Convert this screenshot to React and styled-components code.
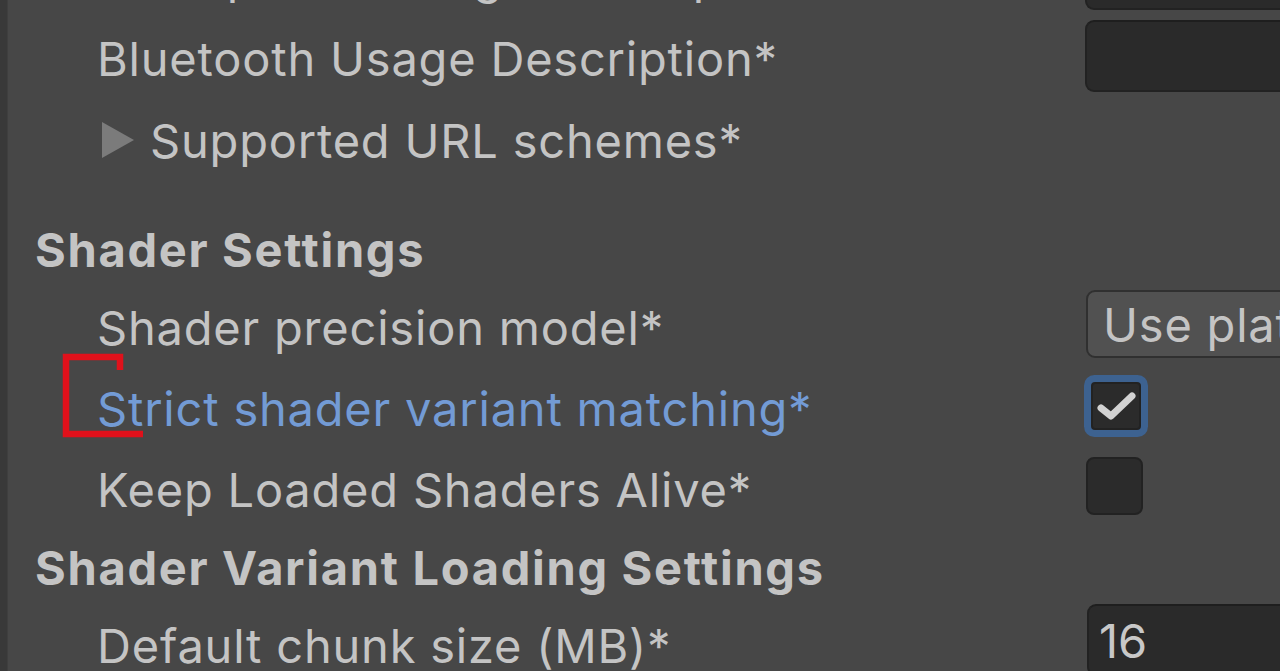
import styled, { createGlobalStyle } from "styled-components";

const GlobalStyle = createGlobalStyle`
  html, body {
    margin: 0;
    padding: 0;
    background: #474747;
  }
`;

const Inspector = styled.div`
  width: 1280px;
  height: 671px;
  overflow: hidden;
  display: flex;
  background: #474747;
  font-family: Inter, "Noto Sans", sans-serif;
  color: #c4c4c4;
`;

const Gutter = styled.div`
  width: 7px;
  flex: none;
  background: #393939;
  border-right: 1px solid #3f3f3f;
`;

const Body = styled.div`
  flex: 1;
  display: flex;
  flex-direction: column;
  margin-top: -65px;
`;

const Row = styled.div`
  position: relative;
  height: ${p => p.$h || 82}px;
  flex: none;
  display: flex;
  align-items: center;
`;

const Spacer = styled.div`
  height: 30px;
  flex: none;
`;

const Label = styled.div`
  width: ${p => 1077 - (p.$indent || 0)}px;
  padding-left: ${p => p.$indent || 0}px;
  flex: none;
  display: flex;
  align-items: center;
  font-size: 47px;
  font-weight: ${p => (p.$bold ? 700 : 400)};
  color: ${p => (p.$active ? "#739bd5" : "#c4c4c4")};
  white-space: nowrap;
  letter-spacing: ${p => (p.$bold ? 1.7 : 0.8)}px;
`;

const Foldout = styled.span`
  width: 0;
  height: 0;
  margin-left: 5px;
  margin-right: 16px;
  border-top: 18px solid transparent;
  border-bottom: 18px solid transparent;
  border-left: 32px solid #7b7b7b;
`;

const Control = styled.div`
  align-self: flex-start;
  margin-top: ${p => p.$top ?? 3}px;
  margin-left: ${p => p.$left || 0}px;
`;

const TextField = styled.div`
  box-sizing: border-box;
  width: 320px;
  height: 72px;
  border-radius: 9px;
  background: #2a2a2a;
  border: 2px solid #222;
  border-top-color: #1e1e1e;
  padding-left: 10px;
  display: flex;
  align-items: center;
  font-size: 47px;
  color: #c8c8c8;
`;

const Dropdown = styled.div`
  box-sizing: border-box;
  width: 320px;
  height: 68px;
  border-radius: 9px;
  background: #515151;
  border: 2px solid #303030;
  padding-left: 15px;
  display: flex;
  align-items: center;
  font-size: 47px;
  letter-spacing: 0.8px;
  color: #c4c4c4;
  white-space: nowrap;
`;

const Check = styled.div`
  box-sizing: border-box;
  width: ${p => (p.$focused ? 50 : 57)}px;
  height: ${p => (p.$focused ? 48 : 58)}px;
  border-radius: ${p => (p.$focused ? 4 : 8)}px;
  background: #2b2b2b;
  border: 2px solid #222;
  display: flex;
  align-items: center;
  justify-content: center;
  box-shadow: ${p => (p.$focused ? "0 0 0 7px #3d6290" : "none")};
`;

const Marker = styled.svg`
  position: absolute;
  left: 55px;
  top: -13px;
  overflow: visible;
`;

const CheckMark = () => (
  <svg width="42" height="32" viewBox="0 0 42 32">
    <path
      d="M6 18 L16 26 L37 6"
      fill="none"
      stroke="#d2d2d2"
      strokeWidth="7"
      strokeLinecap="round"
      strokeLinejoin="round"
    />
  </svg>
);

const App = () => (
  <>
    <GlobalStyle />
    <Inspector>
      <Gutter />
      <Body>
        <Row>
          <Label $indent={89}>Microphone Usage Description*</Label>
          <Control>
            <TextField />
          </Control>
        </Row>
        <Row>
          <Label $indent={89}>Bluetooth Usage Description*</Label>
          <Control>
            <TextField />
          </Control>
        </Row>
        <Row>
          <Label $indent={89}>
            <Foldout />
            Supported URL schemes*
          </Label>
        </Row>
        <Spacer />
        <Row $h={76}>
          <Label $indent={27} $bold>Shader Settings</Label>
        </Row>
        <Row $h={80}>
          <Label $indent={89}>Shader precision model*</Label>
          <Control $left={1}>
            <Dropdown>Use platform defaults for sampler precision</Dropdown>
          </Control>
        </Row>
        <Row>
          <Marker width="80" height="84" viewBox="0 0 80 84">
            <path
              d="M57 16 L57 3 L3 3 L3 80 L80 80"
              fill="none"
              stroke="#e0111b"
              strokeWidth="6.5"
            />
          </Marker>
          <Label $indent={89} $active>Strict shader variant matching*</Label>
          <Control $top={15} $left={6}>
            <Check $focused>
              <CheckMark />
            </Check>
          </Control>
        </Row>
        <Row $h={81}>
          <Label $indent={89}>Keep Loaded Shaders Alive*</Label>
          <Control $top={8} $left={1}>
            <Check />
          </Control>
        </Row>
        <Row $h={74}>
          <Label $indent={27} $bold>Shader Variant Loading Settings</Label>
        </Row>
        <Row>
          <Label $indent={89}>Default chunk size (MB)*</Label>
          <Control $top={0} $left={2}>
            <TextField>16</TextField>
          </Control>
        </Row>
      </Body>
    </Inspector>
  </>
);

export default App;
